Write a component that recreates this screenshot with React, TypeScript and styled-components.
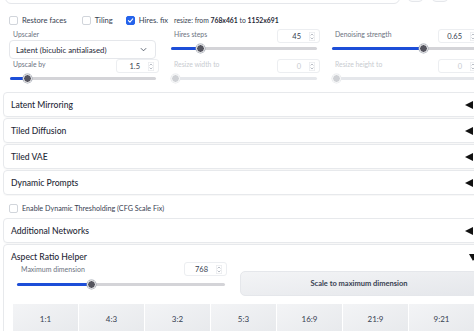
import React from 'react'
import styled, { createGlobalStyle } from 'styled-components'

const GlobalStyle = createGlobalStyle`
  html, body {
    margin: 0;
    padding: 0;
    background: #fff;
    overflow: hidden;
  }
  body {
    font-family: Lato, "Noto Sans", sans-serif;
    color: #374151;
  }
  * { box-sizing: border-box; }
`

const Page = styled.div`
  width: 486px;
  padding-left: 3px;
`

const TopStrip = styled.div`
  display: flex;
  align-items: flex-end;
  height: 4px;
  padding-left: 2px;
`

const PrevBox = styled.div`
  width: 395px;
  height: 20px;
  flex: none;
  border: 1px solid #e5e7eb;
  border-radius: 6px;
`

const MiniButton = styled.div<{ $w: number; $ml: number }>`
  width: ${p => p.$w}px;
  height: 18px;
  margin-left: ${p => p.$ml}px;
  margin-bottom: 2px;
  flex: none;
  border: 1px solid #e5e7eb;
  border-radius: 4px;
  background: #f9fafb;
`

const CheckRow = styled.div<{ $mt: number; $size?: number }>`
  display: flex;
  align-items: center;
  height: 10px;
  margin-top: ${p => p.$mt}px;
  padding-left: 6px;
  font-size: ${p => p.$size ?? 7.2}px;
  white-space: nowrap;
`

const CheckItem = styled.label<{ $mr?: number }>`
  display: flex;
  align-items: center;
  gap: 4px;
  margin-right: ${p => p.$mr ?? 0}px;
  color: #374151;
`

const Box = styled.span<{ $on?: boolean }>`
  width: 9px;
  height: 9px;
  border-radius: 2px;
  border: 1px solid ${p => (p.$on ? '#2563eb' : '#d1d5db')};
  background: ${p => (p.$on ? '#2563eb' : '#fff')};
  display: flex;
  align-items: center;
  justify-content: center;
`

const ResizeNote = styled.span`
  color: #374151;
  font-size: 6.8px;
  b { font-weight: 700; color: #1f2937; }
`

const Grid = styled.div`
  display: grid;
  grid-template-columns: 150px 150px 150px;
  column-gap: 11px;
  margin-top: 4px;
  padding-left: 6px;
`

const Column = styled.div`
  display: flex;
  flex-direction: column;
`

const Block = styled.div`
  height: 30px;
  display: flex;
  flex-direction: column;
`

const FieldLabel = styled.div<{ $off?: boolean; $size?: number }>`
  font-size: ${p => p.$size ?? 6.8}px;
  color: ${p => (p.$off ? '#c8cbd0' : '#6b7280')};
  line-height: 10px;
  padding-left: 4px;
  white-space: nowrap;
`

const Select = styled.div`
  height: 19px;
  margin-top: 1px;
  border: 1px solid #e5e7eb;
  border-radius: 4px;
  display: flex;
  align-items: center;
  justify-content: space-between;
  padding: 0 8px 0 6px;
  font-size: 7.8px;
  color: #1f2937;
  width: 147px;
`

const Header = styled.div`
  height: 14px;
  display: flex;
  justify-content: space-between;
  align-items: flex-start;
`

const NumBox = styled.div<{ $off?: boolean }>`
  width: 43px;
  height: 14px;
  border: 1px solid #eceef1;
  border-radius: 3px;
  display: flex;
  align-items: center;
  justify-content: flex-end;
  padding-right: 4px;
  gap: 8px;
  font-size: 7.5px;
  color: ${p => (p.$off ? '#c8cbd0' : '#374151')};
  flex: none;
`

const SliderRow = styled.div<{ $mt?: number; $ml?: number; $mr?: number }>`
  position: relative;
  height: 10px;
  margin: ${p => p.$mt ?? 0}px ${p => p.$mr ?? 3}px 0 ${p => p.$ml ?? 1}px;
  display: flex;
  align-items: center;
`

const Track = styled.div<{ $off?: boolean }>`
  width: 100%;
  height: 3px;
  border-radius: 2px;
  background: ${p => (p.$off ? '#e5e7eb' : '#d4d4d8')};
`

const Fill = styled.div`
  height: 3px;
  border-radius: 2px;
  background: #1d4ed8;
`

const Thumb = styled.div<{ $off?: boolean }>`
  position: absolute;
  top: 0.5px;
  width: 9px;
  height: 9px;
  margin-left: -4.5px;
  border-radius: 50%;
  background: ${p => (p.$off ? '#cfd1d5' : '#55555f')};
  border: 1px solid #fff;
  box-shadow: 0 0 0 0.5px ${p => (p.$off ? '#e5e7eb' : '#9ca3af')};
`

const Stack = styled.div<{ $mt: number }>`
  display: flex;
  flex-direction: column;
  gap: 1px;
  margin-top: ${p => p.$mt}px;
  width: 478px;
`

const Panel = styled.div`
  height: 25px;
  border: 1px solid #e7e9ec;
  border-radius: 4px;
  display: flex;
  align-items: center;
  justify-content: space-between;
  padding: 0 7px 0 7px;
  font-size: 8.6px;
  font-weight: 500;
  color: #1f2937;
  box-shadow: 0 1px 1px rgba(0, 0, 0, 0.03);
`

const ClosedArrow = styled.span`
  width: 0;
  height: 0;
  border-top: 4px solid transparent;
  border-bottom: 4px solid transparent;
  border-right: 8px solid #111;
`

const OpenArrow = styled.span`
  width: 0;
  height: 0;
  border-left: 4px solid transparent;
  border-right: 4px solid transparent;
  border-top: 7px solid #111;
`

const Helper = styled.div`
  margin-top: 1px;
  width: 478px;
  border: 1px solid #e7e9ec;
  border-radius: 4px;
  padding: 7px 3px 10px 7px;
`

const HelperTitle = styled.div`
  height: 10px;
  display: flex;
  align-items: center;
  justify-content: space-between;
  font-size: 8.6px;
  font-weight: 500;
  color: #1f2937;
`

const HelperBody = styled.div`
  display: flex;
  gap: 11px;
`

const DimColumn = styled.div`
  width: 214px;
  margin-left: 4px;
  flex: none;
  display: flex;
  flex-direction: column;
`

const DimHeader = styled(Header)`
  padding-right: 2px;
`

const ScaleButton = styled.div`
  margin-top: 9px;
  width: 238px;
  height: 25px;
  flex: none;
  border: 1px solid #e5e7eb;
  border-radius: 5px;
  background: linear-gradient(to bottom right, #f3f4f6, #e5e7eb);
  display: flex;
  align-items: center;
  justify-content: center;
  font-size: 7.5px;
  font-weight: 700;
  color: #374151;
`

const Ratios = styled.div`
  display: flex;
  gap: 1px;
  margin-top: 8px;
  margin-left: 2px;
`

const RatioButton = styled.div`
  width: 65px;
  height: 30px;
  flex: none;
  background: linear-gradient(to bottom right, #f3f4f6, #e7e9ec);
  display: flex;
  justify-content: center;
  align-items: flex-start;
  padding-top: 10px;
  font-size: 8px;
  color: #374151;
`

const Spinner = () => (
  <svg width="6" height="9" viewBox="0 0 6 9">
    <rect x="0.25" y="0.25" width="5.5" height="8.5" rx="1" fill="none" stroke="#d1d5db" strokeWidth="0.5" />
    <path d="M1.6 3.4 L3 2 L4.4 3.4 M1.6 5.6 L3 7 L4.4 5.6" fill="none" stroke="#9ca3af" strokeWidth="0.7" />
  </svg>
)

const Tick = () => (
  <svg width="7" height="7" viewBox="0 0 10 10">
    <path d="M2 5.2 L4.2 7.4 L8.2 2.8" fill="none" stroke="#fff" strokeWidth="1.6" strokeLinecap="round" strokeLinejoin="round" />
  </svg>
)

const Chevron = () => (
  <svg width="7" height="5" viewBox="0 0 8 5">
    <path d="M1 1 L4 4 L7 1" fill="none" stroke="#4b5563" strokeWidth="1" />
  </svg>
)

type SliderProps = {
  label: string
  value: string
  pct: number
  off?: boolean
}

const SliderBlock = ({ label, value, pct, off }: SliderProps) => (
  <Block>
    <Header>
      <FieldLabel $off={off}>{label}</FieldLabel>
      <NumBox $off={off}>
        {value}
        <Spinner />
      </NumBox>
    </Header>
    <SliderRow>
      <Track $off={off}>
        <Fill style={{ width: `${pct}%` }} />
      </Track>
      <Thumb $off={off} style={{ left: `${pct}%` }} />
    </SliderRow>
  </Block>
)

const panels = ['Latent Mirroring', 'Tiled Diffusion', 'Tiled VAE', 'Dynamic Prompts']
const ratios = ['1:1', '4:3', '3:2', '5:3', '16:9', '21:9', '9:21']

export default function App() {
  return (
    <>
      <GlobalStyle />
      <Page>
        <TopStrip>
          <PrevBox />
          <MiniButton $w={15} $ml={8} />
          <MiniButton $w={16} $ml={9} />
        </TopStrip>

        <CheckRow $mt={11} $size={7.6}>
          <CheckItem $mr={15}>
            <Box />
            Restore faces
          </CheckItem>
          <CheckItem $mr={13}>
            <Box />
            Tiling
          </CheckItem>
          <CheckItem $mr={6}>
            <Box $on>
              <Tick />
            </Box>
            Hires. fix
          </CheckItem>
          <ResizeNote>
            resize: from <b>768x461</b> to <b>1152x691</b>
          </ResizeNote>
        </CheckRow>

        <Grid>
          <Column>
            <Block>
              <FieldLabel>Upscaler</FieldLabel>
              <Select>
                Latent (bicubic antialiased)
                <Chevron />
              </Select>
            </Block>
            <SliderBlock label="Upscale by" value="1.5" pct={12} />
          </Column>
          <Column>
            <SliderBlock label="Hires steps" value="45" pct={20} />
            <SliderBlock label="Resize width to" value="0" pct={3} off />
          </Column>
          <Column>
            <SliderBlock label="Denoising strength" value="0.65" pct={63} />
            <SliderBlock label="Resize height to" value="0" pct={3} off />
          </Column>
        </Grid>

        <Stack $mt={3}>
          {panels.map(p => (
            <Panel key={p}>
              {p}
              <ClosedArrow />
            </Panel>
          ))}
        </Stack>

        <CheckRow $mt={8}>
          <CheckItem>
            <Box />
            Enable Dynamic Thresholding (CFG Scale Fix)
          </CheckItem>
        </CheckRow>

        <Stack $mt={5}>
          <Panel>
            Additional Networks
            <ClosedArrow />
          </Panel>
        </Stack>

        <Helper>
          <HelperTitle>
            Aspect Ratio Helper
            <OpenArrow />
          </HelperTitle>
          <HelperBody>
            <DimColumn>
              <DimHeader>
                <FieldLabel $size={7} style={{ paddingLeft: 6, paddingTop: 2 }}>
                  Maximum dimension
                </FieldLabel>
                <NumBox>
                  768
                  <Spinner />
                </NumBox>
              </DimHeader>
              <SliderRow $mt={3} $ml={2} $mr={4}>
                <Track>
                  <Fill style={{ width: '36%' }} />
                </Track>
                <Thumb style={{ left: '36%' }} />
              </SliderRow>
            </DimColumn>
            <ScaleButton>Scale to maximum dimension</ScaleButton>
          </HelperBody>
          <Ratios>
            {ratios.map(r => (
              <RatioButton key={r}>{r}</RatioButton>
            ))}
          </Ratios>
        </Helper>
      </Page>
    </>
  )
}
